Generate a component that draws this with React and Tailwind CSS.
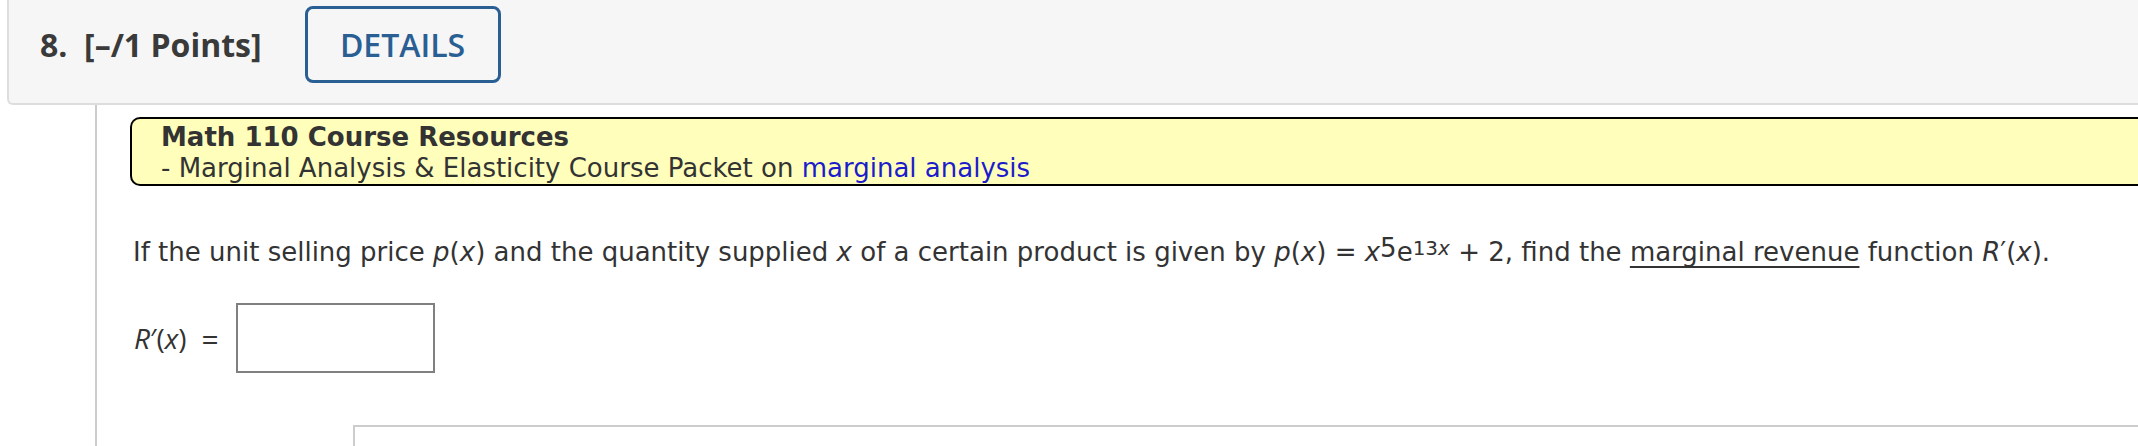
import React from "react";

const verdana = { fontFamily: '"DejaVu Sans", Verdana, sans-serif' };

const Var = ({ children }) => <i className="italic">{children}</i>;

const QuestionHeader = () => {
  return (
    <div className="ml-[7px] h-[105px] bg-[#f6f6f6] border-l-2 border-b-2 border-[#dddddd] rounded-bl-[6px] flex items-start pl-[31px] pt-[6px]">
      <div className="mt-[19px] text-[32px] leading-[40px] font-bold text-[#3a3a3a] font-['Open_Sans',sans-serif] whitespace-pre">
        8.  [–/1 Points]
      </div>
      <button className="ml-[43px] w-[196px] h-[77px] border-[3px] border-[#2a5f94] rounded-[8px] text-[#2a5f94] text-[32px] font-semibold font-['Open_Sans',sans-serif]">
        DETAILS
      </button>
    </div>
  );
};

const Resources = () => {
  return (
    <div
      className="ml-[33px] mt-[12px] h-[69px] bg-[#ffffbb] border-2 border-r-0 border-black rounded-l-[10px] pl-[29px] pt-[3px] text-[26px] leading-[31px] text-[#333333]"
      style={verdana}
    >
      <div className="font-bold">Math 110 Course Resources</div>
      <div>
        - Marginal Analysis &amp; Elasticity Course Packet on{" "}
        <a className="text-[#1c1ccc]">marginal analysis</a>
      </div>
    </div>
  );
};

export default function App() {
  return (
    <div className="w-full h-[446px] bg-white overflow-hidden">
      <QuestionHeader />
      <div className="ml-[95px] border-l-2 border-[#cccccc] h-[341px] flex flex-col">
        <Resources />
        <p className="ml-[36px] mt-[51px] text-[26px] leading-[30px] text-[#333333] whitespace-nowrap" style={verdana}>
          If the unit selling price <Var>p</Var>(<Var>x</Var>) and the quantity supplied <Var>x</Var> of a certain
          product is given by <Var>p</Var>(<Var>x</Var>) = <Var>x</Var>
          <sup className="text-[26px] relative -top-[4px]">5</sup>e
          <sup className="text-[20px] relative -top-[6px]">
            13<Var>x</Var>
          </sup>{" "}
          + 2, find the <span className="underline underline-offset-[5px] decoration-2">marginal revenue</span>{" "}
          function <Var>R</Var>′(<Var>x</Var>).
        </p>
        <div className="ml-[37px] mt-[36px] flex items-center">
          <span className="text-[28px] text-[#333333] font-['Open_Sans',sans-serif] whitespace-nowrap">
            <Var>R</Var>′(<Var>x</Var>)
          </span>
          <span className="text-[30px] text-[#333333] font-['Open_Sans',sans-serif] ml-[15px] mr-[17px]">=</span>
          <div className="w-[199px] h-[70px] border-2 border-[#808080] bg-white"></div>
        </div>
        <div className="ml-[256px] mt-[52px] flex-1 border-t-2 border-l-2 border-[#cccccc]"></div>
      </div>
    </div>
  );
}
